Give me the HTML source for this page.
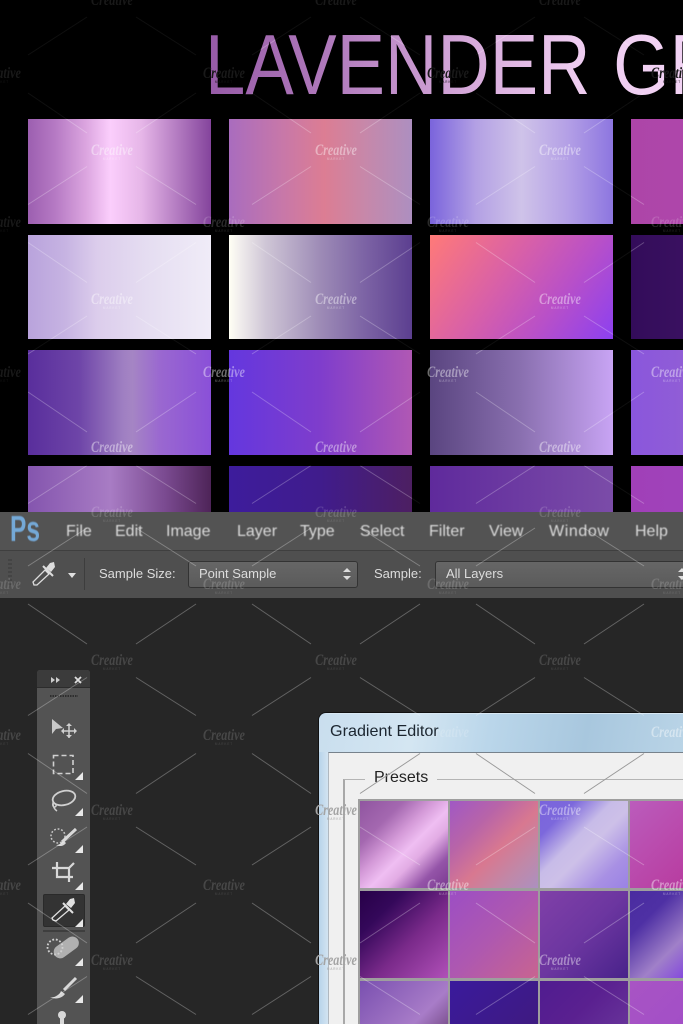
<!DOCTYPE html>
<html><head><meta charset="utf-8"><style>
html,body{margin:0;padding:0;background:#000}
#p{position:relative;width:683px;height:1024px;overflow:hidden;background:#000;font-family:"Liberation Sans",sans-serif}
#p div{position:absolute}
#p svg{position:absolute;left:0;top:0}
.c{width:183px;height:105px}
.t{left:205px;top:18px;width:580px;font-size:85px;line-height:95px;white-space:nowrap;word-spacing:3px;transform:scaleX(.853);transform-origin:0 0;background:linear-gradient(90deg,#965aa6 0,#b07abc 25%,#d8acdc 55%,#eeccf0 75%,#f3d4f5 100%);-webkit-background-clip:text;background-clip:text;color:transparent}
.m{top:522px;color:#dcdcdc;font-size:16px;line-height:20px;filter:blur(.4px)}
.o{color:#dcdcdc;font-size:13px;line-height:16px;top:566px;filter:blur(.35px)}
.s{top:561px;height:25px;background:linear-gradient(#666,#5b5b5b);border:1px solid #333;border-radius:3px}
.g{width:88px;height:87px}
#l text{font-family:"Liberation Serif",serif;font-style:italic;font-weight:700;font-size:16px;text-anchor:middle;transform-box:fill-box;transform-origin:center;transform:scaleX(.76)}
#l text tspan{font-family:"Liberation Sans",sans-serif;font-style:normal;font-weight:400;font-size:4px;letter-spacing:1.2px}
.a{fill:#fff;fill-opacity:.42}.d{fill:#191919}.e{fill:#474747}.h{fill:#fff;fill-opacity:.16}.k{fill:#a4a4a4}
</style></head><body><div id="p">
<div class="t">LAVENDER GRADIENTS</div>

<div class="c" style="left:28px;top:119px;background:linear-gradient(90deg,#9c5fb0 0,#b67ac4 15%,#dca6e0 32%,#fbcefc 45%,#e6b6e8 62%,#b27ac0 82%,#84449c 100%)"></div>
<div class="c" style="left:229px;top:119px;background:linear-gradient(90deg,#a96cbe 0,#c878a8 30%,#dc7d93 52%,#c688aa 75%,#ad8fc0 100%)"></div>
<div class="c" style="left:430px;top:119px;background:linear-gradient(90deg,#7a64dc 0,#b3a0e4 25%,#cfc3e9 50%,#b4a0e6 75%,#8d76e0 100%)"></div>
<div class="c" style="left:631px;top:119px;background:linear-gradient(90deg,#ad45a8,#b04ab0)"></div>

<div class="c" style="left:28px;top:235px;height:104px;background:linear-gradient(90deg,#b9a3dc 0,#c6b3e2 20%,#dccdec 38%,#e5ddf1 65%,#f0ecf8 100%)"></div>
<div class="c" style="left:229px;top:235px;height:104px;background:linear-gradient(90deg,#fffff4 0,#f3f0ee 5%,#cfc6d6 20%,#9d8bb6 50%,#7b62a4 75%,#5c3f90 100%)"></div>
<div class="c" style="left:430px;top:235px;height:104px;background:linear-gradient(125deg,#ff7a78 0,#d860a8 40%,#b850c8 68%,#8c40f0 100%)"></div>
<div class="c" style="left:631px;top:235px;height:104px;background:linear-gradient(90deg,#330c5a,#4a1c70)"></div>

<div class="c" style="left:28px;top:350px;background:linear-gradient(90deg,#592e9c 0,#6e45a8 28%,#9f7fc2 52%,#a585c4 57%,#9a68d0 72%,#8a50d8 100%)"></div>
<div class="c" style="left:229px;top:350px;background:linear-gradient(90deg,#6437de 0,#7f3dcc 50%,#b058b4 100%)"></div>
<div class="c" style="left:430px;top:350px;background:linear-gradient(90deg,#5a4580 0,#8a70b0 50%,#c8a4f4 100%)"></div>
<div class="c" style="left:631px;top:350px;background:linear-gradient(90deg,#8a56dc,#a070c8)"></div>

<div class="c" style="left:28px;top:466px;height:46px;background:linear-gradient(90deg,#8455ae 0,#a87cc4 45%,#7a4a90 75%,#4e2458 100%)"></div>
<div class="c" style="left:229px;top:466px;height:46px;background:linear-gradient(90deg,#3d1c9c 0,#401c8c 50%,#4d1f62 100%)"></div>
<div class="c" style="left:430px;top:466px;height:46px;background:linear-gradient(90deg,#5f2a9c,#7b4ca8)"></div>
<div class="c" style="left:631px;top:466px;height:46px;background:linear-gradient(90deg,#a040b8,#a048c0)"></div>

<!-- Photoshop -->
<div style="left:0;top:512px;width:683px;height:38px;background:#535353"></div>
<div style="left:0;top:550px;width:683px;height:48px;background:#4f4f4f;border-top:1px solid #3f3f3f;box-sizing:border-box"></div>
<div style="left:0;top:598px;width:683px;height:426px;background:#262626"></div>
<div style="left:10px;top:510px;font-size:36px;line-height:38px;font-weight:700;color:#74a8d6;filter:blur(.5px);transform:scaleX(.68);transform-origin:0 0">Ps</div>
<div class="m" style="left:66px">File</div>
<div class="m" style="left:115px">Edit</div>
<div class="m" style="left:166px">Image</div>
<div class="m" style="left:237px">Layer</div>
<div class="m" style="left:300px">Type</div>
<div class="m" style="left:360px">Select</div>
<div class="m" style="left:429px">Filter</div>
<div class="m" style="left:489px">View</div>
<div class="m" style="left:549px;letter-spacing:.6px">Window</div>
<div class="m" style="left:635px">Help</div>
<div style="left:84px;top:558px;width:1px;height:32px;background:#3d3d3d"></div>
<div class="o" style="left:99px">Sample Size:</div>
<div class="s" style="left:188px;width:168px"></div>
<div class="o" style="left:199px">Point Sample</div>
<div class="o" style="left:374px">Sample:</div>
<div class="s" style="left:435px;width:260px"></div>
<div class="o" style="left:446px">All Layers</div>

<!-- Toolbar -->
<div style="left:37px;top:670px;width:53px;height:354px;background:#535353;border-radius:3px 3px 0 0"></div>
<div style="left:37px;top:670px;width:53px;height:18px;background:#3b3b3b;border-radius:3px 3px 0 0;border-bottom:1px solid #2c2c2c;box-sizing:border-box"></div>
<div style="left:43px;top:894px;width:42px;height:33px;background:#333;border:1px solid #2a2a2a;box-sizing:border-box;border-radius:2px"></div>
<div style="left:43px;top:930px;width:42px;height:2px;background:#3e3e3e"></div>

<!-- Gradient Editor -->
<div style="left:319px;top:713px;width:380px;height:320px;background:linear-gradient(90deg,#b8d3ea,#d9e8f3 3%,#d9e8f3);border-radius:7px 7px 0 0;box-shadow:0 0 0 1px #111"></div>
<div style="left:319px;top:714px;width:380px;height:38px;border-radius:7px 7px 0 0;background:linear-gradient(100deg,#c9deee 0,#d4e6f2 25%,#bad6ea 45%,#a8c7de 70%,#bcd6e8 100%)"></div>
<div style="left:328px;top:752px;width:370px;height:280px;background:#f0f0f0;border-top:1px solid #77828c;border-left:1px solid #b0b8c0;box-sizing:border-box"></div>
<div style="left:330px;top:722px;font-size:16px;line-height:20px;color:#1c2630;white-space:nowrap;filter:blur(.3px);transform:scaleX(1.01);transform-origin:0 0">Gradient Editor</div>
<div style="left:343px;top:779px;width:340px;height:260px;border-top:1px solid #b4b4b4;border-left:2px solid #a8a8a8;box-sizing:border-box"></div>
<div style="left:365px;top:768px;padding:0 9px;background:#f0f0f0;font-size:16px;line-height:20px;color:#222;filter:blur(.3px)">Presets</div>
<div style="left:358px;top:799px;width:340px;height:240px;background:#9e9e9e"></div>
<div class="g" style="left:360px;top:801px;background:linear-gradient(135deg,#9055a0 0,#a468b0 25%,#d49ad8 42%,#efbef2 55%,#e2ace4 65%,#9454a8 82%,#7a3a90 100%)"></div>
<div class="g" style="left:450px;top:801px;background:linear-gradient(135deg,#a058c4 0,#b864a8 30%,#d87890 55%,#c088a8 78%,#ac90c0 100%)"></div>
<div class="g" style="left:540px;top:801px;background:linear-gradient(135deg,#7a64dc 0,#7c68dc 20%,#c8bce8 42%,#cdc0e8 55%,#a890e4 80%,#9a82e4 100%)"></div>
<div class="g" style="left:630px;top:801px;width:60px;background:linear-gradient(135deg,#bb5cbc 0,#b83a9e 100%)"></div>
<div class="g" style="left:360px;top:891px;background:linear-gradient(135deg,#270048 0,#34085a 25%,#7a2a8a 58%,#b050b8 100%)"></div>
<div class="g" style="left:450px;top:891px;background:linear-gradient(135deg,#9c4ec4 0,#ae58b0 50%,#c86490 100%)"></div>
<div class="g" style="left:540px;top:891px;background:linear-gradient(135deg,#8040a8 0,#6c36a0 50%,#48228a 100%)"></div>
<div class="g" style="left:630px;top:891px;width:60px;background:linear-gradient(135deg,#4a2ca0 0,#4e30a4 30%,#a080c8 68%,#8040e0 100%)"></div>
<div class="g" style="left:360px;top:981px;background:linear-gradient(135deg,#7a50b0 0,#a87cc8 55%,#4a2050 100%)"></div>
<div class="g" style="left:450px;top:981px;background:linear-gradient(135deg,#3a1a9c,#401a78)"></div>
<div class="g" style="left:540px;top:981px;background:linear-gradient(135deg,#501c90 0,#5a2090 40%,#7040a0 100%)"></div>
<div class="g" style="left:630px;top:981px;width:60px;background:linear-gradient(135deg,#a854c4,#a04cc8)"></div>

<!-- Icons -->
<svg width="683" height="1024" viewBox="0 0 683 1024" style="filter:blur(.35px)">
<g fill="none" stroke="#3a3a3a"><path d="M8 560h4M8 564h4M8 568h4M8 572h4M8 576h4M8 580h4M8 584h4"/></g>
<path d="M34 585L33 582L45 570L49 574L37 585Z" fill="#4f4f4f" stroke="#ddd" stroke-width="1.300"/>
<path d="M43 566L53 576" stroke="#ddd" stroke-width="2"/>
<path d="M46 568L50 563L54 562L55 567L51 572Z" fill="#ddd"/>
<path d="M68 573h8l-4 5z" fill="#e0e0e0"/>
<path d="M343 572l4-4 4 4zM343 576l4 4 4-4z" fill="#ddd"/>
<path d="M678 572l4-4 4 4zM678 576l4 4 4-4z" fill="#ddd"/>

<path d="M51 677l4 3-4 3zM56 677l4 3-4 3z" fill="#ccc"/>
<path d="M75 677l6 6M81 677l-6 6" stroke="#ddd" stroke-width="1.800"/>
<path d="M50 696h28" stroke="#2e2e2e" stroke-width="2" stroke-dasharray="1.500 1"/>

<path d="M52 719L52 734L56 729L63 728Z" fill="#c8c8c8"/>
<path d="M69 724v14M62 731h14" stroke="#d0d0d0" stroke-width="1.500"/>
<path d="M66 726h6l-3-3zM66 735h6l-3 3zM64 728v6l-3-3zM74 728v6l3-3z" fill="#d0d0d0"/>
<rect x="53.500" y="755.500" width="19.500" height="18" fill="none" stroke="#d0d0d0" stroke-width="1.600" stroke-dasharray="5 3"/>
<ellipse cx="64" cy="798" rx="11.500" ry="7" transform="rotate(-14 64 798)" fill="none" stroke="#d0d0d0" stroke-width="1.800"/>
<path d="M53 803c-1 4 2 5 3 3s-2-3-3-3c0 3 1 6 4 8" fill="none" stroke="#d0d0d0" stroke-width="1.500"/>
<circle cx="58" cy="836" r="7" fill="none" stroke="#c8c8c8" stroke-width="1.500" stroke-dasharray="1.800 1.800"/>
<path d="M62 842L76 829" stroke="#d8d8d8" stroke-width="3"/>
<path d="M56 845c3 0 5-1 7-5l3 3c-2 3-6 4-10 2z" fill="#d8d8d8"/>
<path d="M52 868h17v14M57 862v15h16M69 868l5-5" fill="none" stroke="#d8d8d8" stroke-width="2.200"/>
<path d="M53 920L52 918L65 906L69 910L56 921Z" fill="#333" stroke="#e0e0e0" stroke-width="1.300"/>
<path d="M63 903L73 913" stroke="#e0e0e0" stroke-width="2"/>
<path d="M66 904L70 899L74 898L75 903L71 908Z" fill="#e0e0e0"/>
<rect x="52" y="941" width="28" height="13" rx="6.500" transform="rotate(-36 66 947)" fill="#b0b0b0"/>
<circle cx="55" cy="947" r="7.500" fill="none" stroke="#d0d0d0" stroke-width="1.800" stroke-dasharray="1.800 1.800"/>
<path d="M64 990L76 978" stroke="#d8d8d8" stroke-width="3"/>
<path d="M50 997c4 1 9-1 11-6l4 3c-3 4-9 6-15 3z" fill="#d8d8d8"/>
<circle cx="62" cy="1015" r="4" fill="#d8d8d8"/><path d="M60 1018h4v6h-4z" fill="#d8d8d8"/>
<g fill="#e8e8e8"><path d="M83 772v8h-8zM83 808v8h-8zM83 845v8h-8zM83 882v8h-8zM83 919v8h-8zM83 958v8h-8zM83 995v8h-8z"/></g>
</svg>

<!-- watermark lines: brightening layer -->
<svg width="683" height="1024" viewBox="0 0 683 1024" style="mix-blend-mode:color-dodge">
<defs>
<pattern id="w" patternUnits="userSpaceOnUse" width="224" height="149.5"><path d="M28 55L87 17M136 17L196 55M28 93L87 133M136 133L196 93" stroke="#fff" fill="none"/></pattern>
<pattern id="w2" patternUnits="userSpaceOnUse" width="224" height="149.5" y="511"><path d="M28 55L87 17M136 17L196 55M28 93L87 133M136 133L196 93" stroke="#fff" fill="none"/></pattern>
</defs>
<rect width="683" height="512" fill="url(#w)" opacity=".2"/>
<rect y="512" width="683" height="512" fill="url(#w2)" opacity=".2"/>
</svg>
<!-- watermark lines: faint base layer and labels -->
<svg id="l" width="683" height="1024" viewBox="0 0 683 1024">
<defs>
<pattern id="x" patternUnits="userSpaceOnUse" width="224" height="149.5"><path d="M28 55L87 17M136 17L196 55M28 93L87 133M136 133L196 93" stroke="#fff" fill="none"/></pattern>
<pattern id="x2" patternUnits="userSpaceOnUse" width="224" height="149.5" y="511"><path d="M28 55L87 17M136 17L196 55M28 93L87 133M136 133L196 93" stroke="#fff" fill="none"/></pattern>
<pattern id="x3" patternUnits="userSpaceOnUse" width="224" height="149.5" y="511"><path d="M28 55L87 17M136 17L196 55M28 93L87 133M136 133L196 93" stroke="#999" fill="none"/></pattern>
</defs>
<rect width="683" height="512" fill="url(#x)" opacity=".06"/>
<rect y="512" width="683" height="512" fill="url(#x2)" opacity=".1"/>
<rect x="328" y="753" width="355" height="46" fill="url(#x3)"/>

<text x="112" y="5" class="d">Creative</text><text x="336" y="5" class="d">Creative</text><text x="560" y="5" class="d">Creative</text>
<text x="0" y="78" class="d">Creative<tspan x="0" dy="5">MARKET</tspan></text><text x="224" y="78" class="d">Creative<tspan x="224" dy="5">MARKET</tspan></text><text x="448" y="78" class="d">Creative<tspan x="448" dy="5">MARKET</tspan></text><text x="672" y="78" class="d">Creative<tspan x="672" dy="5">MARKET</tspan></text>
<text x="112" y="155" class="a">Creative<tspan x="112" dy="5">MARKET</tspan></text><text x="336" y="155" class="a">Creative<tspan x="336" dy="5">MARKET</tspan></text><text x="560" y="155" class="a">Creative<tspan x="560" dy="5">MARKET</tspan></text>
<text x="0" y="227" class="d">Creative<tspan x="0" dy="5">MARKET</tspan></text><text x="224" y="227" class="h">Creative<tspan x="224" dy="5">MARKET</tspan></text><text x="448" y="227" class="h">Creative<tspan x="448" dy="5">MARKET</tspan></text><text x="672" y="227" class="h">Creative<tspan x="672" dy="5">MARKET</tspan></text>
<text x="112" y="304" class="a">Creative<tspan x="112" dy="5">MARKET</tspan></text><text x="336" y="304" class="a">Creative<tspan x="336" dy="5">MARKET</tspan></text><text x="560" y="304" class="a">Creative<tspan x="560" dy="5">MARKET</tspan></text>
<text x="0" y="377" class="d">Creative<tspan x="0" dy="5">MARKET</tspan></text><text x="224" y="377" class="a">Creative<tspan x="224" dy="5">MARKET</tspan></text><text x="448" y="377" class="a">Creative<tspan x="448" dy="5">MARKET</tspan></text><text x="672" y="377" class="a">Creative<tspan x="672" dy="5">MARKET</tspan></text>
<text x="112" y="452" class="a">Creative</text><text x="336" y="452" class="a">Creative</text><text x="560" y="452" class="a">Creative</text>
<text x="112" y="517" class="h">Creative<tspan x="112" dy="5">MARKET</tspan></text><text x="336" y="517" class="h">Creative<tspan x="336" dy="5">MARKET</tspan></text><text x="560" y="517" class="h">Creative<tspan x="560" dy="5">MARKET</tspan></text>
<text x="0" y="589" class="h">Creative<tspan x="0" dy="5">MARKET</tspan></text><text x="224" y="589" class="h">Creative<tspan x="224" dy="5">MARKET</tspan></text><text x="448" y="589" class="h">Creative<tspan x="448" dy="5">MARKET</tspan></text><text x="672" y="589" class="h">Creative<tspan x="672" dy="5">MARKET</tspan></text>
<text x="112" y="665" class="e">Creative<tspan x="112" dy="5">MARKET</tspan></text><text x="336" y="665" class="e">Creative<tspan x="336" dy="5">MARKET</tspan></text><text x="560" y="665" class="e">Creative<tspan x="560" dy="5">MARKET</tspan></text>
<text x="0" y="740" class="e">Creative<tspan x="0" dy="5">MARKET</tspan></text><text x="224" y="740" class="e">Creative<tspan x="224" dy="5">MARKET</tspan></text><text x="448" y="737" class="h">Creative</text><text x="672" y="737" class="a">Creative</text>
<text x="112" y="815" class="e">Creative<tspan x="112" dy="5">MARKET</tspan></text><text x="336" y="815" class="k">Creative<tspan x="336" dy="5">MARKET</tspan></text><text x="560" y="815" class="a">Creative<tspan x="560" dy="5">MARKET</tspan></text>
<text x="0" y="890" class="e">Creative<tspan x="0" dy="5">MARKET</tspan></text><text x="224" y="890" class="e">Creative<tspan x="224" dy="5">MARKET</tspan></text><text x="448" y="890" class="a">Creative<tspan x="448" dy="5">MARKET</tspan></text><text x="672" y="890" class="a">Creative<tspan x="672" dy="5">MARKET</tspan></text>
<text x="112" y="965" class="e">Creative<tspan x="112" dy="5">MARKET</tspan></text><text x="336" y="965" class="k">Creative<tspan x="336" dy="5">MARKET</tspan></text><text x="560" y="965" class="a">Creative<tspan x="560" dy="5">MARKET</tspan></text>
</svg>
</div></body></html>
